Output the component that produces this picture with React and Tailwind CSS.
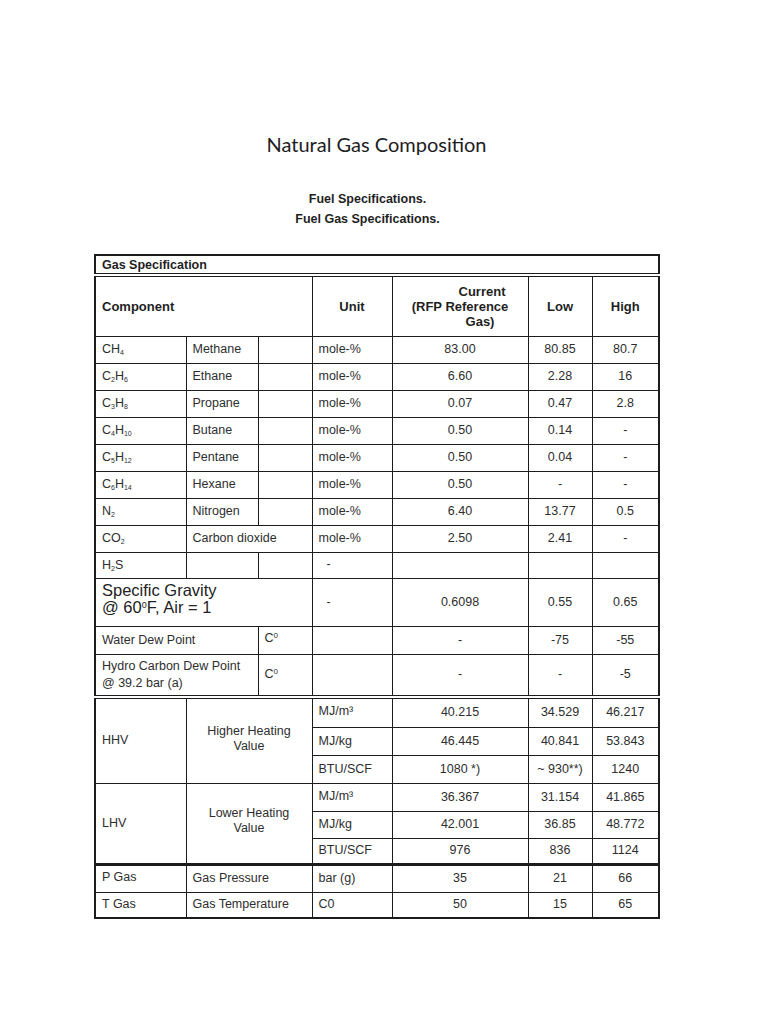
import React from "react";

const COLS = [91, 72, 54, 80, 136, 64, 67];

const GASES = [
  { formula: ["CH", "4"], name: "Methane", current: "83.00", low: "80.85", high: "80.7" },
  { formula: ["C", "2", "H", "6"], name: "Ethane", current: "6.60", low: "2.28", high: "16" },
  { formula: ["C", "3", "H", "8"], name: "Propane", current: "0.07", low: "0.47", high: "2.8" },
  { formula: ["C", "4", "H", "10"], name: "Butane", current: "0.50", low: "0.14", high: "-" },
  { formula: ["C", "5", "H", "12"], name: "Pentane", current: "0.50", low: "0.04", high: "-" },
  { formula: ["C", "6", "H", "14"], name: "Hexane", current: "0.50", low: "-", high: "-" },
  { formula: ["N", "2"], name: "Nitrogen", current: "6.40", low: "13.77", high: "0.5" },
];

const HHV = [
  { unit: "MJ/m³", current: "40.215", low: "34.529", high: "46.217", h: "h-[30px]", top: true },
  { unit: "MJ/kg", current: "46.445", low: "40.841", high: "53.843", h: "h-[28px]" },
  { unit: "BTU/SCF", current: "1080 *)", low: "~ 930**)", high: "1240", h: "h-[28px]" },
];

const LHV = [
  { unit: "MJ/m³", current: "36.367", low: "31.154", high: "41.865", h: "h-[28px]", top: true },
  { unit: "MJ/kg", current: "42.001", low: "36.85", high: "48.772", h: "h-[27px]" },
  { unit: "BTU/SCF", current: "976", low: "836", high: "1124", h: "h-[26px]" },
];

// formula parts alternate: text, subscript, text, subscript
const Formula = ({ parts }) => (
  <span>
    {parts.map((p, i) =>
      i % 2 === 0 ? (
        <span key={i}>{p}</span>
      ) : (
        <sub key={i} className="text-[7px] align-baseline relative top-[2px]">{p}</sub>
      )
    )}
  </span>
);

const td = "border border-[#1c1c1c] px-[6px] py-0 align-middle";

function HeatingBlock({ label, title, rows, doubleTop, thickBottom }) {
  const topCls = doubleTop ? "border-t-[4px] border-double" : "";
  const bottomCls = thickBottom ? "border-b-[3px]" : "";

  return rows.map((r, i) => {
    const edge = `${i === 0 ? topCls : ""} ${i === 2 ? bottomCls : ""}`;
    return (
      <tr key={r.unit + i} className={r.h}>
        {i === 0 && (
          <>
            <td rowSpan={3} className={`${td} ${topCls} ${bottomCls}`}>
              {label}
            </td>
            <td rowSpan={3} colSpan={2} className={`${td} ${topCls} ${bottomCls} text-center leading-[15px] pb-[4px]`}>
              {title[0]}
              <br />
              {title[1]}
            </td>
          </>
        )}
        <td className={`${td} ${edge} ${r.top ? "align-top pt-[3px]" : ""}`}>{r.unit}</td>
        <td className={`${td} ${edge} text-center`}>{r.current}</td>
        <td className={`${td} ${edge} text-center`}>{r.low}</td>
        <td className={`${td} ${edge} text-center`}>{r.high}</td>
      </tr>
    );
  });
}

export default function App() {
  return (
    <div className="min-h-[1024px] w-[768px] bg-white">
      <div className="ml-[94px] w-[565px] pt-[130px]">
        <h1 className="text-center text-[20px] leading-[28px] text-[#1d1d1f] font-normal" style={{ fontFamily: "Lato, 'Noto Sans', sans-serif" }}>
          Natural Gas Composition
        </h1>
        <div className="mt-[31px] pr-[18px] text-center font-bold text-[12.5px] leading-[20px] text-[#1f1f1f]" style={{ fontFamily: "'Liberation Sans', Arial, sans-serif" }}>
          <p>Fuel Specifications.</p>
          <p>Fuel Gas Specifications.</p>
        </div>

        <table
          className="mt-[25px] w-[565px] table-fixed border-collapse border-2 border-[#1c1c1c] text-[12.5px] text-[#2e2e2e]"
          style={{ fontFamily: "'Liberation Sans', Arial, sans-serif" }}
        >
          <colgroup>
            {COLS.map((w, i) => (
              <col key={i} style={{ width: w }} />
            ))}
          </colgroup>
          <tbody>
            <tr className="h-[18px]">
              <td colSpan={7} className={`${td} border-b-[4px] border-double font-bold text-[#1f1f1f] align-top pt-[1px] leading-[16px]`}>
                Gas Specification
              </td>
            </tr>
            <tr className="h-[61px] font-bold text-[13px] text-[#1f1f1f]">
              <td colSpan={3} className={td}>Component</td>
              <td className={`${td} text-center`}>Unit</td>
              <td className={`${td} text-center leading-[15px]`}>
                <div className="pl-[44px]">Current</div>
                <div>(RFP Reference</div>
                <div className="pl-[40px]">Gas)</div>
              </td>
              <td className={`${td} text-center`}>Low</td>
              <td className={`${td} text-center`}>High</td>
            </tr>

            {GASES.map((g) => (
              <tr key={g.name} className="h-[27px]">
                <td className={td}><Formula parts={g.formula} /></td>
                <td className={td}>{g.name}</td>
                <td className={td}></td>
                <td className={td}>mole-%</td>
                <td className={`${td} text-center`}>{g.current}</td>
                <td className={`${td} text-center`}>{g.low}</td>
                <td className={`${td} text-center`}>{g.high}</td>
              </tr>
            ))}

            <tr className="h-[27px]">
              <td className={td}><Formula parts={["CO", "2"]} /></td>
              <td colSpan={2} className={td}>Carbon dioxide</td>
              <td className={td}>mole-%</td>
              <td className={`${td} text-center`}>2.50</td>
              <td className={`${td} text-center`}>2.41</td>
              <td className={`${td} text-center`}>-</td>
            </tr>
            <tr className="h-[26px]">
              <td className={td}><Formula parts={["H", "2", "S"]} /></td>
              <td className={td}></td>
              <td className={td}></td>
              <td className={`${td} pl-[14px] align-top pt-[2px]`}>-</td>
              <td className={td}></td>
              <td className={td}></td>
              <td className={td}></td>
            </tr>

            <tr className="h-[48px]">
              <td colSpan={3} className={`${td} text-[16.5px] leading-[17px] text-[#222] pb-[6px]`}>
                Specific Gravity
                <br />
                @ 60<sup className="text-[9px] relative -top-[5px] align-baseline">0</sup>F, Air = 1
              </td>
              <td className={`${td} pl-[14px]`}>-</td>
              <td className={`${td} text-center`}>0.6098</td>
              <td className={`${td} text-center`}>0.55</td>
              <td className={`${td} text-center`}>0.65</td>
            </tr>
            <tr className="h-[28px]">
              <td colSpan={2} className={td}>Water Dew Point</td>
              <td className={`${td} align-top pt-[2px]`}>C<sup className="text-[8px] relative -top-[4px] align-baseline">0</sup></td>
              <td className={td}></td>
              <td className={`${td} text-center`}>-</td>
              <td className={`${td} text-center`}>-75</td>
              <td className={`${td} text-center`}>-55</td>
            </tr>
            <tr className="h-[43px]">
              <td colSpan={2} className={`${td} leading-[17px]`}>
                Hydro Carbon Dew Point
                <br />
                @ 39.2 bar (a)
              </td>
              <td className={td}>C<sup className="text-[8px] relative -top-[4px] align-baseline">0</sup></td>
              <td className={td}></td>
              <td className={`${td} text-center`}>-</td>
              <td className={`${td} text-center`}>-</td>
              <td className={`${td} text-center`}>-5</td>
            </tr>

            <HeatingBlock label="HHV" title={["Higher Heating", "Value"]} rows={HHV} doubleTop />
            <HeatingBlock label="LHV" title={["Lower Heating", "Value"]} rows={LHV} thickBottom />

            <tr className="h-[28px]">
              <td className={`${td} align-top pt-[2px]`}>P Gas</td>
              <td colSpan={2} className={td}>Gas Pressure</td>
              <td className={td}>bar (g)</td>
              <td className={`${td} text-center`}>35</td>
              <td className={`${td} text-center`}>21</td>
              <td className={`${td} text-center`}>66</td>
            </tr>
            <tr className="h-[26px]">
              <td className={`${td} align-top pt-[2px]`}>T Gas</td>
              <td colSpan={2} className={td}>Gas Temperature</td>
              <td className={`${td} align-top pt-[2px]`}>C0</td>
              <td className={`${td} text-center`}>50</td>
              <td className={`${td} text-center`}>15</td>
              <td className={`${td} text-center`}>65</td>
            </tr>
          </tbody>
        </table>
      </div>
    </div>
  );
}
